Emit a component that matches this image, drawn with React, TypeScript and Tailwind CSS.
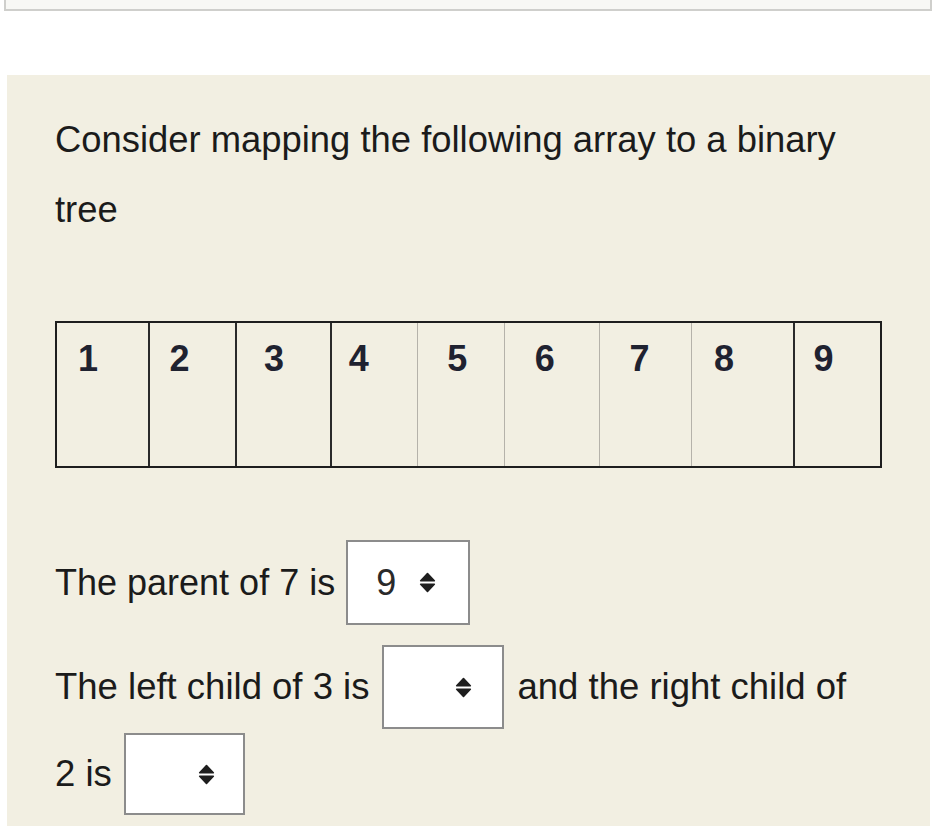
import React from "react";

const cells = [
  { n: "1", w: 91, pl: 21, b: "" },
  { n: "2", w: 88, pl: 20, b: "border-l-2 border-[#2a2a2a]" },
  { n: "3", w: 95, pl: 27, b: "border-l-2 border-[#2a2a2a]" },
  { n: "4", w: 88, pl: 17, b: "border-l-2 border-[#2a2a2a]" },
  { n: "5", w: 87, pl: 29, b: "border-l border-[#b5b2aa]" },
  { n: "6", w: 96, pl: 30, b: "border-l border-[#b5b2aa]" },
  { n: "7", w: 92, pl: 29, b: "border-l border-[#b5b2aa]" },
  { n: "8", w: 103, pl: 22, b: "border-l border-[#b5b2aa]" },
  { n: "9", w: 87, pl: 18, b: "border-l-2 border-[#2a2a2a]" },
];

function Arrows() {
  return (
    <svg width="17" height="21" viewBox="0 0 16 20" className="shrink-0">
      <path d="M8 1.5 L14.5 8.3 L1.5 8.3 Z" fill="#1e1e1e" stroke="#1e1e1e" strokeWidth="1.5" strokeLinejoin="round" />
      <path d="M1.5 11.7 L14.5 11.7 L8 18.5 Z" fill="#1e1e1e" stroke="#1e1e1e" strokeWidth="1.5" strokeLinejoin="round" />
    </svg>
  );
}

function SelectBox({ value, w, h, pr }: { value?: string; w: string; h: string; pr: string }) {
  return (
    <div className={`${w} ${h} ${pr} flex items-center justify-end gap-[23px] border-2 border-[#8c8c8c] bg-white shrink-0`}>
      {value ? <span className="text-[36px] leading-none text-[#2a2a2a]">{value}</span> : null}
      <Arrows />
    </div>
  );
}

export default function App() {
  return (
    <div className="min-h-[826px] bg-white text-[#1b1b1b]" style={{ fontFamily: '"Liberation Sans", Arial, sans-serif' }}>
      <div className="ml-[4px] mr-[5px] h-[11px] border-x-2 border-b-2 border-[#cfcfcc] bg-[#f8f8f5]" />
      <div className="ml-[7px] mr-[7px] mt-[64px] min-h-[751px] bg-[#f2efe2] px-[48px] pt-[30px]">
        <p className="text-[36.4px] leading-[70px]">
          Consider mapping the following array to a binary tree
        </p>
        <div className="mt-[76px] flex h-[147px] border-2 border-[#1e1e1e]">
          {cells.map((c) => (
            <div
              key={c.n}
              className={`${c.b} pt-[16px] text-[36px] font-bold leading-[40px] text-[#1f2230]`}
              style={{ width: c.w, paddingLeft: c.pl, flexGrow: c.n === "9" ? 1 : 0 }}
            >
              {c.n}
            </div>
          ))}
        </div>
        <div className="mt-[72px] flex items-center gap-[11px] text-[36px] leading-[40px]">
          <span>The parent of 7 is</span>
          <SelectBox value="9" w="w-[124px]" h="h-[85px]" pr="pr-[32px]" />
        </div>
        <div className="mt-[20px] flex items-center gap-[13px] text-[36.5px] leading-[40px]">
          <span>The left child of 3 is</span>
          <SelectBox w="w-[122px]" h="h-[84px]" pr="pr-[30px]" />
          <span>and the right child of</span>
        </div>
        <div className="mt-[4px] flex items-center gap-[12px] text-[36.5px] leading-[40px]">
          <span>2 is</span>
          <SelectBox w="w-[121px]" h="h-[82px]" pr="pr-[28px]" />
        </div>
      </div>
    </div>
  );
}
